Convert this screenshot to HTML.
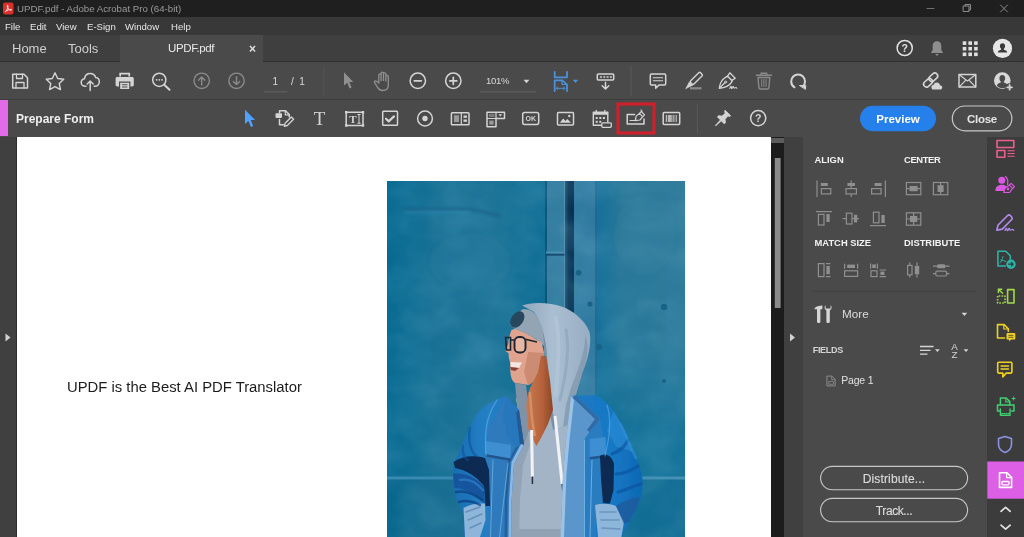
<!DOCTYPE html>
<html><head><meta charset="utf-8"><title>UPDF.pdf - Adobe Acrobat Pro</title>
<style>
*{margin:0;padding:0;box-sizing:border-box}
html,body{width:1024px;height:537px;overflow:hidden;background:#4a4a4a;font-family:"Liberation Sans",sans-serif;}
.a{position:absolute}
.t{position:absolute;white-space:nowrap;line-height:1}
#title{left:0;top:0;width:1024px;height:17px;background:#1f1f1f}
#menu{left:0;top:17px;width:1024px;height:18px;background:#383838}
#tabs{left:0;top:35px;width:1024px;height:27px;background:#3f3f3f;border-bottom:1px solid #303030}
#tab{left:120px;top:35px;width:143px;height:28px;background:#4a4a4a}
#tb1{left:0;top:63px;width:1024px;height:37px;background:#4a4a4a;border-bottom:1px solid #3d3d3d}
#tb2{left:0;top:100px;width:1024px;height:37px;background:#4a4a4a}
#pink{left:0;top:100px;width:8px;height:36px;background:#e26be8}
#lstrip{left:0;top:137px;width:17px;height:400px;background:#404040;border-right:1px solid #2c2c2c}
#page{left:17px;top:137px;width:754px;height:400px;background:#fff}
#sb{left:771px;top:137px;width:13px;height:400px;background:#1c1c1c}
#gap{left:784px;top:137px;width:19px;height:400px;background:#404040}
#panel{left:803px;top:137px;width:184px;height:400px;background:#4a4a4a}
#rstrip{left:987px;top:137px;width:37px;height:400px;background:#3c3c3c}
svg{position:absolute;overflow:visible}
</style></head><body>
<div class="a" id="title"></div>
<div class="a" id="menu"></div>
<div class="a" id="tabs"></div>
<div class="a" id="tab"></div>
<div class="a" id="tb1"></div>
<div class="a" id="tb2"></div>
<div class="a" id="pink"></div>
<div class="a" id="lstrip"></div>
<div class="a" id="page"></div>
<div class="a" id="sb"></div>
<div class="a" id="gap"></div>
<div class="a" id="panel"></div>
<div class="a" id="rstrip"></div>

<!-- PHOTO -->
<svg class="a" style="left:387px;top:181px" width="298" height="356" viewBox="387 181 298 356">
<defs>
<clipPath id="pc"><rect x="387" y="181" width="298" height="356"/></clipPath>
<filter id="b1" x="-10%" y="-10%" width="120%" height="120%"><feGaussianBlur stdDeviation="0.7"/></filter>
<filter id="b2" x="-20%" y="-20%" width="140%" height="140%"><feGaussianBlur stdDeviation="1.6"/></filter>
<filter id="b4" x="-30%" y="-30%" width="160%" height="160%"><feGaussianBlur stdDeviation="4"/></filter>
<filter id="noise" x="0" y="0" width="100%" height="100%"><feTurbulence type="fractalNoise" baseFrequency="0.02 0.03" numOctaves="3" seed="7" result="n"/><feColorMatrix in="n" type="matrix" values="0 0 0 0 0.1  0 0 0 0 0.35  0 0 0 0 0.5  1.6 0 0 0 -0.62"/></filter><filter id="noise2" x="0" y="0" width="100%" height="100%"><feTurbulence type="fractalNoise" baseFrequency="0.025 0.03" numOctaves="3" seed="23" result="n"/><feColorMatrix in="n" type="matrix" values="0 0 0 0 0.3  0 0 0 0 0.62  0 0 0 0 0.78  1.6 0 0 0 -0.62"/></filter>
<linearGradient id="wallL" x1="0" y1="0" x2="1" y2="0"><stop offset="0" stop-color="#076a92"/><stop offset="0.3" stop-color="#187196"/><stop offset="0.65" stop-color="#1d7497"/><stop offset="1" stop-color="#0f6e96"/></linearGradient>
<linearGradient id="wallR" x1="0" y1="0" x2="1" y2="0"><stop offset="0" stop-color="#14709a"/><stop offset="0.3" stop-color="#2a7899"/><stop offset="1" stop-color="#317c9b"/></linearGradient><linearGradient id="wallRv" x1="0" y1="0" x2="0" y2="1"><stop offset="0" stop-color="#0f7099" stop-opacity="0"/><stop offset="0.45" stop-color="#0f7099" stop-opacity="0.1"/><stop offset="0.75" stop-color="#0f7099" stop-opacity="0.85"/><stop offset="1" stop-color="#0f7099" stop-opacity="0.9"/></linearGradient><linearGradient id="gapg" x1="0" y1="0" x2="1" y2="0"><stop offset="0" stop-color="#1a5c84"/><stop offset="0.45" stop-color="#0a3252"/><stop offset="1" stop-color="#082d4d"/></linearGradient>
<linearGradient id="hood" x1="0" y1="0" x2="1" y2="0"><stop offset="0" stop-color="#8fa6bb"/><stop offset="0.45" stop-color="#abbfd2"/><stop offset="1" stop-color="#97adc2"/></linearGradient>
<linearGradient id="denL" x1="0" y1="0" x2="1" y2="0"><stop offset="0" stop-color="#186db2"/><stop offset="0.5" stop-color="#2580c6"/><stop offset="1" stop-color="#1f72b8"/></linearGradient>
<linearGradient id="denR" x1="0" y1="0" x2="1" y2="0"><stop offset="0" stop-color="#2377bd"/><stop offset="0.6" stop-color="#1579c6"/><stop offset="1" stop-color="#0f68b4"/></linearGradient>
<linearGradient id="hair" x1="0" y1="0" x2="1" y2="0"><stop offset="0" stop-color="#c77a52"/><stop offset="0.6" stop-color="#b5613a"/><stop offset="1" stop-color="#8a4628"/></linearGradient>
</defs>
<g clip-path="url(#pc)">
<!-- wall -->
<rect x="387" y="181" width="161" height="356" fill="url(#wallL)"/>
<rect x="596" y="181" width="89" height="356" fill="url(#wallR)"/><rect x="596" y="181" width="89" height="356" fill="url(#wallRv)"/>
<rect x="547" y="181" width="17.500" height="200" fill="#327da0"/>
<rect x="564.500" y="181" width="9.500" height="200" fill="url(#gapg)"/>

<rect x="574" y="181" width="22" height="260" fill="#307aa0"/>
<rect x="595" y="181" width="2" height="300" fill="#1b6a90"/>
<rect x="545" y="181" width="2" height="150" fill="#0e5278"/>
<rect x="546" y="251.700" width="18.500" height="2" fill="#4a8fb0"/><rect x="546" y="253.700" width="18.500" height="2" fill="#0e4468"/>
<!-- wall texture -->
<rect x="387" y="181" width="298" height="356" filter="url(#noise)" opacity=".2"/>
<rect x="387" y="181" width="298" height="356" filter="url(#noise2)" opacity=".16"/>
<g filter="url(#b2)">
<path d="M404 209 H470 L500 216" stroke="#165f86" stroke-width="2.5" fill="none" opacity=".8"/>
<path d="M404 212.5 H470" stroke="#3089b5" stroke-width="2" fill="none" opacity=".7"/>
<ellipse cx="470" cy="262" rx="40" ry="28" fill="#2a7c9e" opacity=".35"/>

<ellipse cx="645" cy="235" rx="30" ry="40" fill="#3a829f" opacity=".3"/>
</g>
<!-- rivets -->
<g fill="#1a6288"><circle cx="578.600" cy="272.800" r="2.800"/><circle cx="590" cy="304" r="2.6"/><circle cx="599" cy="347" r="3"/><circle cx="664" cy="307" r="3.2"/><circle cx="664" cy="381" r="2"/></g>
<!-- horizontal seam -->
<rect x="387" y="476.5" width="70" height="3" fill="#3d8db5" opacity=".9"/>
<rect x="640" y="476.5" width="45" height="3" fill="#4a93b8" opacity=".9"/>
<rect x="387" y="479.5" width="298" height="58" fill="#0f4f74" opacity=".12"/>

<!-- PERSON -->
<g filter="url(#b1)">
<!-- left sleeve + body -->
<path d="M506 396 C494 400 485 405 479.400 411 C474 417 471 424 468.800 429.400 L458.200 453.200 C455 461 453 468 452.900 474.400 C452.800 482 454 490 455.600 495.500 C458 503 461 509 463.500 514 L464.800 537 L512 537 L512 502 L514 464 L524 445 L519 410 Z" fill="url(#denL)"/>
<!-- right sleeve + body -->
<path d="M571 396 L596.300 395 C604 400 609 405 613.500 411 C619 419 623 427 626.700 434.700 L637.300 461 C640 468 642 474 642.600 479.700 C643 487 642 494 640 500.800 C637 509 633 516 629.400 522 L621.400 537 L560.600 537 L563 474 L566 440 Z" fill="url(#denR)"/>
<!-- hoodie body -->
<path d="M516 398 L524 445 L514 464 L511.500 502 L511.500 537 L560.600 537 L563 474 L567 438 L573 400 L560 396 Z" fill="#a3b4c6"/>
<path d="M516 398 L524 445 L514 464 L511.500 502 L511.500 537 L519 537 L520 500 L523 465 L530 445 L524 400 Z" fill="#92a3b6"/>
<path d="M511.500 529 H560.600 V537 H511.500Z" fill="#91a2b5"/>
<!-- hood -->
<path d="M522 305.500 C530 302 550 302 561.500 306.600 C572 310 585 320 589.500 332 C592 342 588 360 582.500 372 L577.800 388 L573 404.500 L570 424 L553 430 L549 410 L546 380 L544 345 L534 312 Z" fill="url(#hood)"/>
<path d="M534 312 C541 322 545 335 546.500 350 L549 380 L552 410 L557 428 L553 430 L549 410 L546 380 L544 345 Z" fill="#7a8fa3"/>
<path d="M577.800 388 L573 404.500 L570 424 L563 427 L566 405 L572 385 C580 365 586 348 585 335 C590 345 587 362 582.500 372 Z" fill="#8298ad" opacity=".8"/>
<!-- hood left/neck -->
<path d="M515 383 L526 385 L531 425 L524 445 L517 404 Z" fill="#8093a6"/>
<!-- beanie -->
<path d="M510.300 325.300 C512 319 515 315 518.400 312.500 L523 309 C527 309 531 310 533.600 312.500 C538 318 541 324 542.900 330 L544 346 L536 339 L526.600 333.400 L515 328.800 Z" fill="#93a5b5"/>
<ellipse cx="517.300" cy="319.500" rx="6" ry="9" transform="rotate(35 517.300 319.500)" fill="#28465c"/>
<!-- face -->
<path d="M511.400 330 C509.500 335 508.500 340 508.300 344 L505.300 351 L508.600 353.200 L508.800 358 L510 362 L510.300 371 C510.600 377 512 381 514.500 382.800 L528 385 C533 383 537 379 540 372 L544 353 L541.700 342.800 L526.600 333.400 L515 328.800 Z" fill="#e0a48e"/>
<path d="M528 352 L544 353 L540 372 C537 379 533 383 528 385 L524 372 Z" fill="#cc8b73"/>
<!-- mouth -->
<path d="M510.300 362 L522 362.500 L519 368 L511 367 Z" fill="#f3e6e2"/>
<path d="M510.300 367 L519 368 L515 371 L511 370 Z" fill="#8c3f3a"/>
<!-- glasses -->
<path d="M505.600 337.500 H510.500 V350 H506.500Z" fill="none" stroke="#1d2530" stroke-width="1.600"/>
<rect x="514.500" y="337" width="11" height="15.500" rx="4.500" fill="#e8b7a4" stroke="#1d2530" stroke-width="1.900"/>
<path d="M510.500 340 H514.500 M525.500 339.300 L537 342" stroke="#1d2530" stroke-width="1.500" fill="none"/>
<!-- hair -->
<path d="M541 356 L538 372 L530 388 C527 396 526 404 526.600 410 L528 428 L533 440 L536.500 446 L541 438 L548 424 L553 410 L550 380 L546 356 Z" fill="url(#hair)"/>
<path d="M530 392 C531 405 531 420 535 436" stroke="#dc9568" stroke-width="2.500" fill="none" opacity=".8"/>
<!-- drawstrings -->
<path d="M531.600 430 L532.400 476.600" stroke="#f1f3f6" stroke-width="3" fill="none"/>
<path d="M532.400 476.600 V484" stroke="#2a2f3a" stroke-width="1.500"/>
<path d="M555 416 L562.200 484" stroke="#f1f3f6" stroke-width="3" fill="none"/>
<path d="M562.200 484 L562.800 491" stroke="#2a2f3a" stroke-width="1.500"/>
<!-- left front panel (lighter) -->
<path d="M506 396 L519 410 L524 445 L514 464 L511.500 502 L511.500 537 L486 537 L489 500 L486 458 L488 430 Z" fill="#2e7abd"/>
<!-- left collar -->
<path d="M506 396 L519 410 L524 445 L516 447 L507 436 L503 415 Z" fill="#2877bc"/>
<path d="M519 410 L524 445 L520 446 L516 412 Z" fill="#1f4f86" opacity=".7"/>
<!-- left lapel inner edge light -->
<path d="M524 445 L514 464 L511.500 502 L511.500 537 L508.500 537 L509 500 L511.500 462 L521 444 Z" fill="#8cb8e2"/>
<path d="M507 537 L507.500 500 L510 462 L519 446 L516 447 L507.500 462 L505 500 L504.500 537 Z" fill="#245a94" opacity=".8"/>
<!-- left pocket flap -->
<path d="M485.500 441 L511 445 L510.500 458.500 L485 454 Z" fill="#3e8fd1"/>
<path d="M485 454 L510.500 458.500 L510.500 461 L485 456.500 Z" fill="#1e4c80" opacity=".8"/>
<!-- left dark crease -->
<path d="M453.500 462 C462 456 474 455 485 458 L489 470 L490 506 L485.500 506 L484 486 C476 476 466 470 455 468 Z" fill="#0b2a52"/>
<path d="M453 474 C462 472 474 476 484 486 L485 504 C476 494 464 488 454.500 488 Z" fill="#13549e"/>
<!-- left cuff -->
<path d="M463.500 508 C470 504 478 503 485 503.500 L485.500 520 L480 537 L465 537 Z" fill="#8db6da"/>
<!-- right lapel / placket -->
<path d="M571 396 L575 395 L600 419 L589.700 432 L584 440 L584 537 L560.600 537 L563 474 L566 440 Z" fill="#5a95cb"/>
<path d="M571 396 L566 440 L563 474 L560.600 537 L564 537 L566.500 474 L569.500 440 L574 400 Z" fill="#9cc3e6"/>
<path d="M575 395 L600 419 L589.700 432 L587 430 L595 419 L573 398 Z" fill="#26609c" opacity=".8"/>
<!-- right body front panel -->
<path d="M584 440 L589.700 432 L600 419 L604 440 L601 470 L603 503 L596 506 L596 537 L584 537 Z" fill="#2a7cc1"/>
<!-- right pocket flap -->
<path d="M589.700 439 L605.600 437 L606 455 L589.700 457 Z" fill="#3e8fd1"/>
<path d="M589.700 457 L606 455 L606 457.500 L589.700 459.500 Z" fill="#1e4c80" opacity=".8"/>
<!-- right dark crease -->
<path d="M600 456 C606 452 612 456 614 464 L613.500 490 L610 503.500 L603 503 L601 478 Z" fill="#0b2a52"/>
<!-- right sleeve highlight -->
<path d="M613.500 411 C619 419 623 427 626.700 434.700 L634 453 C628 450 622 447 616 447 L607 430 Z" fill="#2a8ad3" opacity=".7"/>
<!-- right cuff -->
<path d="M595 505 C602 503 610 503.500 616 506 L624 522 L621.400 537 L598 537 Z" fill="#8db6da"/>
<path d="M616 506 C622 502 630 498 640 497 L637 507 L629 522 L624 524 Z" fill="#1f5796" opacity=".7"/>
<!-- seams & folds -->
<g fill="none" stroke-linecap="round">
<path d="M497 400 C487 415 484 430 486 456" stroke="#5aa5e0" stroke-width="1.200" opacity=".8"/>
<path d="M493 460 L490.500 537 M508 463 L499.500 537" stroke="#6fb2e3" stroke-width="1" opacity=".8"/>
<path d="M607 405 C612 420 609 440 605 456" stroke="#5aa5e0" stroke-width="1.200" opacity=".7"/>
<path d="M592 460 L590 537 M584.500 440 L584.500 537" stroke="#7fbbe8" stroke-width="1" opacity=".8"/>
<path d="M470 428 C468 440 470 450 476 456 M463 446 C462 452 464 458 468 460" stroke="#0f4f96" stroke-width="2.500" opacity=".55"/>
<path d="M456 492 C464 490 474 494 482 500 M459 502 C466 500 474 502 480 505" stroke="#0c3d7c" stroke-width="2.500" opacity=".7"/>
<path d="M460 480 C468 478 476 482 483 490" stroke="#2b7ac2" stroke-width="2.500" opacity=".8"/>
<path d="M628 440 C624 448 618 452 612 454 M638 466 C632 470 624 474 616 474 M641 484 C634 486 626 490 618 492" stroke="#0c4f9c" stroke-width="3" opacity=".6"/>
<path d="M620 424 C626 434 630 446 636 458" stroke="#2f93dc" stroke-width="3" opacity=".5"/>
<path d="M466 512 L480 507 M468 520 L482 514 M470 528 L481 523" stroke="#5c86b0" stroke-width="1.500" opacity=".8"/>
<path d="M600 512 L616 512 M601 520 L619 520 M602 528 L620 529" stroke="#5c86b0" stroke-width="1.500" opacity=".7"/>
<path d="M566 330 C570 350 566 375 560 400" stroke="#8ba2b8" stroke-width="3" opacity=".6"/>
<path d="M556 318 C560 340 558 365 556 395" stroke="#bacbdb" stroke-width="4" opacity=".5"/>
</g>
</g>
</g>
</g>
</svg>

<!-- ICONS -->
<svg class="a" style="left:0;top:0" width="1024" height="537" viewBox="0 0 1024 537" fill="none" stroke-linecap="round" stroke-linejoin="round">
<g id="titleicons">
  <rect x="3" y="2.5" width="10.5" height="12" rx="2" fill="#d9302a"/>
  <path d="M5.5 11.5c1.5-1 2.6-3.5 2.6-5.5 0-.9-1-.9-1 0 0 1.800 2 4 3.900 4.300.8.100.8-.9 0-.9-1.800 0-4 .900-5.500 2.100z" stroke="#fff" stroke-width=".8"/>
  <path d="M927 8.500h7" stroke="#707070" stroke-width="1"/>
  <rect x="963.5" y="6" width="5.500" height="5.500" stroke="#8c8c8c" stroke-width="1"/>
  <path d="M965 6v-1.500h5.500v5.500h-1.500" stroke="#8c8c8c" stroke-width="1"/>
  <path d="M1000.500 5l7 7m0-7l-7 7" stroke="#8c8c8c" stroke-width="1"/>
</g>
<g id="tabicons">
  <circle cx="904.700" cy="48" r="7.600" stroke="#e2e2e2" stroke-width="1.500"/>
  <text x="904.700" y="52" font-family="Liberation Sans, sans-serif" font-size="10.500" font-weight="bold" fill="#e2e2e2" stroke="none" text-anchor="middle">?</text>
  <path d="M937 41.300c-3 0-4.300 2.300-4.300 5v3.500l-1.800 3.200h12.200l-1.800-3.200v-3.500c0-2.700-1.300-5-4.300-5zm-1.500 12.700h3c0 2-3 2-3 0z" fill="#8e8e8e"/>
  <g fill="#e0e0e0"><rect x="962.700" y="41.300" width="3.600" height="3.600"/><rect x="968.400" y="41.300" width="3.600" height="3.600"/><rect x="974.100" y="41.300" width="3.600" height="3.600"/><rect x="962.700" y="46.900" width="3.600" height="3.600"/><rect x="968.400" y="46.900" width="3.600" height="3.600"/><rect x="974.100" y="46.900" width="3.600" height="3.600"/><rect x="962.700" y="52.500" width="3.600" height="3.600"/><rect x="968.400" y="52.500" width="3.600" height="3.600"/><rect x="974.100" y="52.500" width="3.600" height="3.600"/></g>
  <circle cx="1002.500" cy="48.400" r="9.600" fill="#e6e6e6"/>
  <path d="M1002.500 43.200c1.700 0 2.600 1.300 2.600 2.800 0 1.300-.6 2.300-1.200 2.800v.9c2 .5 3.300 1.300 3.300 2.800h-9.400c0-1.500 1.300-2.300 3.300-2.800v-.9c-.6-.5-1.200-1.500-1.200-2.800 0-1.500.9-2.800 2.600-2.800z" fill="#3a3a3a"/>
</g>
<g id="tb1icons" stroke="#d4d4d4" stroke-width="1.500">
  <!-- save -->
  <path d="M12.700 74.200h11.300l3.500 3.500v10.300h-14.800z"/>
  <path d="M16.500 74.200v4.300h6v-4.300M16 88v-5.500h8v5.500" stroke-width="1.300"/>
  <!-- star -->
  <path d="M55 72.800l2.650 5.700 6.100.75-4.500 4.250 1.200 6.100-5.450-3.050-5.450 3.050 1.200-6.100-4.500-4.250 6.100-.75z" stroke-width="1.400"/>
  <!-- cloud up -->
  <path d="M86 86.300h-.8c-2.300 0-4-1.700-4-3.800 0-2 1.500-3.500 3.300-3.800.4-3 2.700-5.200 5.700-5.200 2.700 0 4.800 1.700 5.500 4.100 2 .2 3.600 2 3.600 4.200 0 2.500-1.900 4.500-4.300 4.500h-.8"/>
  <path d="M90.200 90.500v-9.300m-3 2.800l3-3 3 3"/>
  <!-- printer -->
  <g fill="#d4d4d4" stroke="none">
  <path d="M119.300 72.800h10.800v3.700h-1.700v-2h-7.400v2h-1.700z"/>
  <path d="M117.300 77h14.800c1 0 1.700.7 1.700 1.700v6.100c0 .9-.7 1.600-1.700 1.600h-1.700v-4.800h-11.400v4.800h-1.700c-1 0-1.700-.7-1.700-1.600v-6.100c0-1 .7-1.700 1.700-1.700z"/>
  <path d="M120.200 82.800h9v6.100h-9zm1.800 1.500v1h5.400v-1zm0 2.100v1h5.400v-1z" fill-rule="evenodd"/>
  </g>
  <!-- magnifier -->
  <circle cx="159.300" cy="79.800" r="6.600"/>
  <path d="M164.200 84.700l5.300 5.100" stroke-width="2"/>
  <g fill="#d4d4d4" stroke="none"><circle cx="156.600" cy="79.800" r=".9"/><circle cx="159.300" cy="79.800" r=".9"/><circle cx="162" cy="79.800" r=".9"/></g>
  <!-- up/down circles -->
  <g stroke="#8a8a8a" stroke-width="1.400">
  <circle cx="201.700" cy="80.800" r="7.700"/><path d="M201.700 85v-8m-3.200 3.200l3.200-3.200 3.200 3.200"/>
  <circle cx="236.500" cy="80.800" r="7.700"/><path d="M236.500 76.600v8m-3.200-3.200l3.200 3.200 3.200-3.200"/>
  </g>
  <path d="M264 91.800h23" stroke="#636363" stroke-width="1"/>
  <path d="M323.800 66v30" stroke="#545454" stroke-width="1"/>
  <!-- cursor gray -->
  <path d="M344 72.300l9.300 9.600h-4l2.300 5.600-2 .9-2.400-5.600-3.200 2.800z" fill="#909090" stroke="none"/>
  <!-- hand -->
  <g stroke="#909090" stroke-width="1.300">
  <path d="M378.800 83v-7.800c0-1.600 2.300-1.600 2.300 0v5.500-7.300c0-1.600 2.400-1.600 2.400 0v7-6.300c0-1.600 2.400-1.600 2.400 0v6.800-4.400c0-1.600 2.400-1.600 2.400 0v8.500c0 3.300-2 5.500-5.500 5.500-2.700 0-4-1.200-5.200-3.200l-3-4.700c-.8-1.300.9-2.400 1.900-1.300z"/>
  </g>
  <!-- minus/plus -->
  <circle cx="417.800" cy="80.800" r="7.700"/><path d="M414.300 80.800h7" stroke-width="1.700"/>
  <circle cx="453.300" cy="80.800" r="7.700"/><path d="M449.800 80.800h7m-3.500-3.500v7" stroke-width="1.700"/>
  <!-- zoom dropdown -->
  <path d="M523.600 79.800h5.800l-2.900 3.500z" fill="#d4d4d4" stroke="none"/>
  <path d="M480 91.800h56" stroke="#636363" stroke-width="1"/>
  <!-- blue page -->
  <g stroke="#4b92db" stroke-width="1.800">
  <path d="M554.700 72v5.300h12.300v-5.300"/>
  <path d="M554.700 91v-10.700h7.600l4.700 4.400v6.300"/>
  <path d="M562 80v4.500h5" stroke-width="1.200"/>
  <path d="M556.500 88.300h8.500m-7.300-1.300l-1.400 1.300 1.400 1.300m5.800-2.600l1.400 1.300-1.400 1.300" stroke-width="1"/>
  </g>
  <path d="M572.800 79.800h5.400l-2.700 3.300z" fill="#4b92db" stroke="none"/>
  <!-- keyboard down -->
  <rect x="597.300" y="74" width="16.400" height="6" rx="1" stroke-width="1.500"/>
  <path d="M600.500 77h1m2.300 0h1m2.300 0h1m2.300 0h1" stroke-width="1.300"/>
  <path d="M605.500 82.300v6.500m-3.300-3l3.300 3.200 3.300-3.200"/>
  <path d="M631 66v30" stroke="#595959" stroke-width="1"/>
  <!-- comment -->
  <path d="M651.500 74h13c.7 0 1.200.5 1.200 1.200v8.500c0 .7-.5 1.200-1.200 1.200h-5.500l-3.300 3.400v-3.400h-4.200c-.7 0-1.200-.5-1.200-1.200v-8.500c0-.7.500-1.200 1.200-1.200z"/>
  <path d="M653.300 77.800h9.300m-9.300 3h9.300" stroke-width="1.100"/>
  <!-- highlighter -->
  <rect x="-2.300" y="-7.500" width="4.600" height="14" rx="1.300" transform="translate(696 78.800) rotate(45)" stroke-width="1.400"/>
  <path d="M689.600 82.200l3 3-3.400 1.600-3.400 1.800 1.800-3.200z" fill="#d4d4d4" stroke-width=".8"/>
  <path d="M690 88.300h11.500" stroke="#8a8a8a" stroke-width="2.200" stroke-linecap="butt"/>
  <!-- sign pen -->
  <path d="M719.300 88.200c.5-5 2.600-8.800 6.700-11.200l1.600-.8 4.600 4.600-.8 1.600c-2.400 4.100-6.200 5.500-12.100 5.800z" stroke-width="1.400"/>
  <path d="M727.400 76.400l2.400-3.600 5.400 5.400-3.600 2.400M719.600 87.900l5.200-5.200" stroke-width="1.300"/>
  <circle cx="725.600" cy="82" r="1" stroke-width="1"/>
  <path d="M729.800 88.400c.8-2.600 1.600-2.600 1.600-.6 0 1 .7 1 1.200-.5.400-1.100 1-1.100 1 0 0 .9.800 1 1.500.5.600-.6 1.200-.4 1.700.4" stroke-width="1.100"/>
  <!-- trash -->
  <g stroke="#8a8a8a" stroke-width="1.400">
  <path d="M756.300 75.300h15.200M761 75v-1.800h5.800v1.800M758 77.500l.9 10.200c.1.800.6 1.300 1.400 1.300h7.200c.8 0 1.300-.5 1.400-1.300l.9-10.200z"/>
  <path d="M761.700 79.500v7m2.200-7v7m2.200-7v7" stroke-width="1"/>
  </g>
  <!-- rotate -->
  <path d="M794.500 87.300c-2-1.200-3.300-3.400-3.300-5.900 0-3.800 3.100-6.900 6.900-6.900s6.900 3.100 6.900 6.900c0 1.700-.6 3.200-1.500 4.400" stroke-width="2"/>
  <path d="M799.800 85.500h6l-.3 3.500z" fill="#d4d4d4" stroke-width="1"/>
  <!-- link cloud -->
  <rect x="-4.900" y="-2.900" width="9.800" height="5.800" rx="2.900" transform="translate(933.300 77.300) rotate(-42)" stroke-width="1.600"/>
  <rect x="-4.900" y="-2.900" width="9.800" height="5.800" rx="2.900" transform="translate(928 82.800) rotate(-42)" stroke-width="1.600"/>
  <path transform="translate(-1 0)" d="M934 89.600h7c1.300 0 2.300-1 2.300-2.200s-1-2.200-2.300-2.200c-.3-1.600-1.600-2.600-3.200-2.600-1.500 0-2.700.9-3.100 2.200-1.300.1-2.300 1.100-2.300 2.400 0 1.300 1 2.400 1.600 2.400z" fill="#d4d4d4" stroke="none"/>
  <!-- mail -->
  <rect x="959" y="74.500" width="16.800" height="12.500" stroke-width="1.500"/>
  <path d="M959.300 74.800l8.100 6.200 8.100-6.200M959.300 86.800l6.500-6.700m9.700 6.700l-6.500-6.700" stroke-width="1.200"/>
  <!-- user plus -->
  <circle cx="1002.300" cy="80.600" r="8.300" fill="#d8d8d8" stroke="none"/>
  <path d="M1002.300 75c1.900 0 2.900 1.500 2.900 3.200 0 1.500-.7 2.600-1.400 3.200v1c2.300.6 3.700 1.700 4 3.200-1.400 1.800-3.400 2.600-5.500 2.600s-4.100-.8-5.500-2.600c.3-1.500 1.700-2.600 4-3.200v-1c-.7-.6-1.400-1.700-1.400-3.200 0-1.700 1-3.200 2.900-3.200z" fill="#4a4a4a" stroke="none"/>
  <circle cx="1009.600" cy="87.500" r="4.300" fill="#4a4a4a" stroke="none"/>
  <path d="M1007.200 87.300h4.800m-2.400-2.400v4.800" stroke-width="1.800"/>
</g>
</svg>

<!-- ICONS2 -->
<svg class="a" style="left:0;top:0" width="1024" height="537" viewBox="0 0 1024 537" fill="none" stroke-linecap="round" stroke-linejoin="round">
<g id="tb2icons" stroke="#d4d4d4" stroke-width="1.500">
  <!-- blue cursor -->
  <path d="M245 109.800l10 10.300h-4.300l2.500 6-2.200 1-2.600-6-3.400 3z" fill="#4da3ff" stroke="none"/>
  <!-- doc pencil -->
  <path d="M279.500 113v-2.300h6l3.800 3.800v2.500M279.500 119.500v5.300h4" stroke-width="1.500"/>
  <path d="M285.300 110.800v4h4" stroke-width="1.200"/>
  <rect x="275.500" y="113.300" width="6.500" height="4.600" rx=".8" fill="#d4d4d4" stroke="none"/>
  <path d="M284.300 126.300l.8-3 6.300-6.300 2.200 2.200-6.300 6.300z" stroke-width="1.300"/>
  <!-- T -->
  <text x="319.500" y="125" font-family="Liberation Serif, serif" font-size="19" fill="#d4d4d4" stroke="none" text-anchor="middle">T</text>
  <!-- text field -->
  <rect x="346.200" y="112.200" width="16.800" height="13.300" stroke-width="1.500"/>
  <g fill="#d4d4d4" stroke="none"><rect x="345" y="111" width="2.400" height="2.400"/><rect x="361.800" y="111" width="2.400" height="2.400"/><rect x="345" y="124.300" width="2.400" height="2.400"/><rect x="361.800" y="124.300" width="2.400" height="2.400"/></g>
  <text x="352.800" y="123" font-family="Liberation Serif, serif" font-size="11" font-weight="bold" fill="#d4d4d4" stroke="none" text-anchor="middle">T</text>
  <path d="M359 114.500v8.700m-1.200-8.700h2.400m-2.400 8.700h2.400" stroke-width="1"/>
  <!-- checkbox -->
  <rect x="382.700" y="111.300" width="14.800" height="14" rx=".8" stroke-width="1.500"/>
  <path d="M386 118.700l2.700 2.700 5.300-5" stroke-width="2.200"/>
  <!-- radio -->
  <circle cx="425" cy="118.500" r="7.400" stroke-width="1.500"/>
  <circle cx="425" cy="118.500" r="2.700" fill="#d4d4d4" stroke="none"/>
  <!-- dropdown -->
  <rect x="451.400" y="112.800" width="17.600" height="11.900" rx=".8" stroke-width="1.500"/>
  <path d="M461.300 113v11.500" stroke-width="1.200"/>
  <rect x="454" y="115.300" width="5" height="6.800" fill="#9a9a9a" stroke="none"/>
  <rect x="463.500" y="115.500" width="3.400" height="2.300" fill="#d4d4d4" stroke="none"/><rect x="463.500" y="119.500" width="3.400" height="2.300" fill="#d4d4d4" stroke="none"/>
  <!-- listbox -->
  <path d="M487 112.300h17.500v6.200h-8.500v8.200h-9z" stroke-width="1.500"/>
  <path d="M487 118.500h9m0-6v6" stroke-width="1.200"/>
  <rect x="489.300" y="120.600" width="4.300" height="4" fill="#9a9a9a" stroke="none"/>
  <rect x="489" y="113.800" width="5.500" height="3.200" fill="#7a7a7a" stroke="none"/>
  <path d="M498.500 114.300h3.600l-1.800 2.200z" fill="#d4d4d4" stroke="none"/>
  <!-- OK -->
  <rect x="522.700" y="112.600" width="16" height="11.800" rx="1.800" stroke-width="1.500"/>
  <text x="530.700" y="121.300" font-family="Liberation Sans, sans-serif" font-size="7" font-weight="bold" fill="#d4d4d4" stroke="none" text-anchor="middle">OK</text>
  <!-- image -->
  <rect x="557.500" y="112.600" width="16" height="12.300" rx=".8" stroke-width="1.500"/>
  <path d="M559.800 122.800l3.400-4.300 2.300 2.400 1.800-1.800 3.700 3.700z" fill="#d4d4d4" stroke="none"/>
  <circle cx="569.300" cy="116" r="1.200" fill="#d4d4d4" stroke="none"/>
  <!-- date -->
  <path d="M593.300 112.200h14.500v13h-14.500z" stroke-width="1.400"/>
  <path d="M593.300 113.600h14.500" stroke-width="2.300" stroke-linecap="butt"/>
  <path d="M596.300 110.400v2.500m8.500-2.500v2.500" stroke-width="1.300"/>
  <g fill="#d4d4d4" stroke="none"><rect x="595.700" y="117" width="2" height="2"/><rect x="599.300" y="117" width="2" height="2"/><rect x="602.900" y="117" width="2" height="2"/><rect x="595.700" y="120.800" width="2" height="2"/><rect x="599.300" y="120.800" width="2" height="2"/></g>
  <rect x="601.800" y="122.800" width="9.500" height="4.500" rx="1" fill="#4a4a4a" stroke-width="1.300"/>
  <!-- red highlight -->
  <rect x="618" y="104" width="36" height="29" stroke="#cd202c" stroke-width="3.200" stroke-linejoin="miter"/>
  <!-- signature -->
  <path d="M634.500 114.500h-7.300v9.500h16.800v-5" stroke-width="1.500"/>
  <path d="M630 120.500h5.500" stroke-width="1.100"/>
  <path d="M635.300 120.700l.8-4.600 3.300-2.700 3.300 3.300-2.700 3.300z" stroke-width="1.200"/>
  <path d="M639.800 113l1.500-1.500 3.300 3.300-1.500 1.500M641 109.800l1 1.500" stroke-width="1.100"/>
  <!-- barcode -->
  <rect x="663.200" y="112.600" width="16.500" height="11.800" rx=".8" stroke-width="1.500"/>
  <path d="M666.300 115v7m2-7v7m3.600-7v7m2-7v7m2.300-7v7" stroke-width="1" stroke-linecap="butt"/>
  <path d="M670 115v7" stroke-width="1.600" stroke-linecap="butt"/>
  <path d="M697.400 104v29" stroke="#595959" stroke-width="1"/>
  <!-- pin -->
  <path d="M725.300 110.300l5.500 5.500-1.300.9-1.500-.7-2.800 3.300.4 3.300-1.300 1.300-3-3-5.500 5-.5-.5 5-5.500-3-3 1.300-1.300 3.300.4 3.300-2.800-.7-1.500z" fill="#d4d4d4" stroke-width=".6"/>
  <!-- help -->
  <circle cx="758.200" cy="118.100" r="7.600" stroke="#d4d4d4" stroke-width="1.500"/>
  <text x="758.200" y="122" font-family="Liberation Sans, sans-serif" font-size="10.500" font-weight="bold" fill="#d4d4d4" stroke="none" text-anchor="middle">?</text>
</g>
<!-- buttons -->
<rect x="860" y="105.700" width="76" height="25.600" rx="12.800" fill="#2680eb"/>
<rect x="952.300" y="106" width="59.600" height="24.800" rx="12.400" stroke="#c9c9c9" stroke-width="1.200"/>
<!-- left/right strip arrows -->
<path d="M5.500 333.500l5 4-5 4z" fill="#d0d0d0"/>
<path d="M790 333.500l5 4-5 4z" fill="#d0d0d0"/>
<!-- scrollbar -->
<rect x="771" y="138" width="13" height="5" fill="#5c5c5c"/>
<rect x="774.800" y="158" width="5.800" height="150" fill="#8a8a8a"/>
</svg>
<div class="t" style="left:272.500px;top:77px;font-size:10px;color:#d8d8d8">1</div>
<div class="t" style="left:291px;top:77px;font-size:10px;color:#d8d8d8">/&nbsp;&nbsp;1</div>
<div class="t" style="left:486px;top:76px;font-size:9.5px;letter-spacing:-0.25px;color:#d8d8d8">101%</div>
<div class="t" style="left:860px;top:113.7px;width:76px;text-align:center;font-size:11.5px;font-weight:bold;color:#fff">Preview</div>
<div class="t" style="left:952px;top:113.7px;width:60px;text-align:center;font-size:11.5px;letter-spacing:-0.3px;font-weight:bold;color:#e4e4e4">Close</div>

<!-- ICONS3 -->
<svg class="a" style="left:0;top:0" width="1024" height="537" viewBox="0 0 1024 537" fill="none" stroke-linecap="butt" stroke-linejoin="miter">
<g id="panelicons" stroke="#8f8f8f" stroke-width="1.200">
  <!-- align left -->
  <path d="M817 180.500v16.500"/><rect x="820.800" y="183" width="7" height="3" fill="#8f8f8f" stroke="none"/><rect x="821.400" y="188.600" width="9.400" height="5.300"/>
  <!-- align hcenter -->
  <path d="M851.200 180.500v16.500"/><rect x="847.400" y="183" width="7.600" height="3" fill="#8f8f8f" stroke="none"/><rect x="846" y="188.600" width="10.400" height="5.300" fill="#4a4a4a"/>
  <!-- align right -->
  <path d="M885.400 180.500v16.500"/><rect x="874.600" y="183" width="7" height="3" fill="#8f8f8f" stroke="none"/><rect x="871.600" y="188.600" width="9.400" height="5.300"/>
  <!-- center 1 -->
  <rect x="906.400" y="182.500" width="14.400" height="12.200"/><path d="M906.400 188.600h14.400"/><rect x="909.600" y="186" width="8" height="5.200" fill="#8f8f8f" stroke="none"/>
  <!-- center 2 -->
  <rect x="933.400" y="182.500" width="14.400" height="12.200"/><path d="M940.600 182.500v12.200"/><rect x="937.600" y="185.200" width="6" height="6.800" fill="#8f8f8f" stroke="none"/>
  <!-- align top -->
  <path d="M816 211.600h16"/><rect x="818.400" y="214.400" width="5.600" height="10.600"/><rect x="826.400" y="214" width="3.300" height="8" fill="#8f8f8f" stroke="none"/>
  <!-- align middle -->
  <path d="M842.500 218.600h16.500"/><rect x="846.400" y="213.200" width="5.600" height="10.800" fill="#4a4a4a"/><rect x="854" y="214.800" width="3.200" height="7.600" fill="#8f8f8f" stroke="none"/>
  <!-- align bottom -->
  <path d="M870 225.600h16"/><rect x="873.400" y="212.200" width="5.600" height="10.600"/><rect x="881.400" y="215" width="3.300" height="8" fill="#8f8f8f" stroke="none"/>
  <!-- center 3 -->
  <rect x="906.400" y="212.800" width="14.400" height="12.400"/><path d="M906.400 219h14.400M913.600 212.800v12.400"/><rect x="910" y="216" width="7.200" height="6" fill="#8f8f8f" stroke="none"/>
  <!-- match 1 -->
  <rect x="818.400" y="263.600" width="5.600" height="13"/><rect x="826.400" y="266" width="3.400" height="8.200" fill="#8f8f8f" stroke="none"/><path d="M826 263.600h4.400M826 276.600h4.400"/>
  <!-- match 2 -->
  <rect x="844.600" y="270.800" width="13" height="5.600"/><rect x="847.200" y="264.600" width="7.800" height="3.400" fill="#8f8f8f" stroke="none"/><path d="M844.600 263.800v5M857.600 263.800v5"/>
  <!-- match 3 -->
  <rect x="871" y="270.800" width="6" height="5.800"/><rect x="872.200" y="264.400" width="3.600" height="3.600" fill="#8f8f8f" stroke="none"/><path d="M870.600 263.400v5.400M877.400 263.400v5.400"/>
  <rect x="880.400" y="271.600" width="4" height="3.400" fill="#8f8f8f" stroke="none"/><path d="M879.600 270h6.400M879.600 276.600h6.400"/>
  <!-- distribute 1 -->
  <path d="M909.800 262.600v15M917 262.600v15"/><rect x="907.600" y="265.400" width="4.400" height="9.400" fill="#4a4a4a"/><rect x="914.800" y="266" width="4.400" height="8.200" fill="#8f8f8f" stroke="none"/>
  <!-- distribute 2 -->
  <path d="M933 266.200h16.400M933 273.600h16.400"/><rect x="937" y="264.200" width="8.400" height="4" rx="1.500" fill="#8f8f8f" stroke="none"/><rect x="935.800" y="271.200" width="10.800" height="4.800" rx="1.500" fill="#4a4a4a"/>
</g>
<path d="M812 291.300h164" stroke="#414141" stroke-width="1"/>
<!-- tools icon (More) -->
<g fill="#d6d6d6" stroke="none">
  <path d="M814.600 308.200c1.600-2 4.200-2.800 7.800-2.800v3.800h-2v12.600c0 1.600-3.400 1.600-3.400 0v-12.600h-2.400z"/>
  <path d="M825.600 305.200c-1.400 1-1.600 3.800.8 5.200v11.400c0 1.700 3.400 1.700 3.400 0v-11.400c2.400-1.400 2.200-4.200.8-5.200v3.400h-5z"/>
</g>
<path d="M961.600 312.700h5.600l-2.800 3.200z" fill="#d6d6d6"/>
<!-- fields sort icons -->
<path d="M920 346.500h13.500M920 350.300h10.500M920 354.100h7.500" stroke="#d6d6d6" stroke-width="1.300"/>
<path d="M935 349.300h4.800l-2.400 2.800z" fill="#d6d6d6"/>
<path d="M963.600 349.300h4.800l-2.400 2.800z" fill="#d6d6d6"/>
<text x="954.600" y="349.600" font-family="Liberation Sans, sans-serif" font-size="9.800" fill="#d6d6d6" text-anchor="middle">A</text>
<text x="954.600" y="358.200" font-family="Liberation Sans, sans-serif" font-size="9.800" fill="#d6d6d6" text-anchor="middle">Z</text>
<!-- page icon -->
<path d="M826.900 376.100h5l3.300 3.300v6.500h-8.300z" stroke="#8a8a8a" stroke-width="1"/>
<path d="M831.700 376.300v3.300h3.300" stroke="#8a8a8a" stroke-width=".9"/>
<rect x="828.800" y="381.600" width="4.600" height="2.600" stroke="#8a8a8a" stroke-width=".8"/>
<!-- panel buttons -->
<rect x="820.600" y="466.400" width="147" height="23.400" rx="11.700" stroke="#c8c8c8" stroke-width="1.100"/>
<rect x="820.600" y="498.400" width="147" height="23.400" rx="11.700" stroke="#c8c8c8" stroke-width="1.100"/>
</svg>
<div class="t" style="left:814.500px;top:155.100px;font-size:9.400px;font-weight:bold;color:#f2f2f2">ALIGN</div>
<div class="t" style="left:904px;top:155.100px;font-size:9.400px;font-weight:bold;letter-spacing:-0.35px;color:#f2f2f2">CENTER</div>
<div class="t" style="left:814.500px;top:238.400px;font-size:9.400px;font-weight:bold;color:#f2f2f2">MATCH SIZE</div>
<div class="t" style="left:904px;top:238.400px;font-size:9.400px;font-weight:bold;color:#f2f2f2">DISTRIBUTE</div>
<div class="t" style="left:842px;top:308.400px;font-size:11.700px;color:#dcdcdc">More</div>
<div class="t" style="left:812.700px;top:346.400px;font-size:9px;letter-spacing:-0.3px;font-weight:bold;color:#d4d4d4">FIELDS</div>
<div class="t" style="left:841.200px;top:375.200px;font-size:10.5px;letter-spacing:-0.2px;color:#e2e2e2">Page 1</div>
<div class="t" style="left:820px;top:472.600px;width:148px;text-align:center;font-size:12px;letter-spacing:0.15px;-webkit-text-stroke:0.15px #dadada;color:#dadada">Distribute...</div>
<div class="t" style="left:820px;top:504.600px;width:148px;text-align:center;font-size:12px;letter-spacing:-0.4px;-webkit-text-stroke:0.15px #dadada;color:#dadada">Track...</div>

<!-- ICONS4 -->
<svg class="a" style="left:0;top:0" width="1024" height="537" viewBox="0 0 1024 537" fill="none" stroke-linecap="round" stroke-linejoin="round">

<!-- 1 form layout pink -->
<g stroke="#ea5f8e" stroke-width="1.600">
  <rect x="997" y="140.500" width="16.800" height="7"/>
  <rect x="997" y="150.500" width="7.800" height="6.800"/>
  <path d="M1008 150.700h6.300m-6.300 2.800h6.300m-6.300 2.700h6.300" stroke-width="1.100"/>
</g>
<!-- 2 person sign magenta -->
<g fill="#da58e2" stroke="none">
  <circle cx="1001.800" cy="180.300" r="3.500"/>
  <path d="M995.300 191c0-4 2.800-6.200 6.500-6.200 2 0 3.600.6 4.700 1.800l-2.800 4.400z"/>
</g>
<g stroke="#da58e2" stroke-width="1.200">
  <path d="M1005.500 176.500c2 1.800 2.800 4.800 2 7.800"/>
  <path d="M1003.800 192.500l1.300-4.600 4.200-2.800 3.200 3.200-2.800 4.200z"/>
  <path d="M1009.600 184.600l1.600-1.200 3.200 3.200-1.200 1.600"/>
  <circle cx="1008" cy="189" r=".8"/>
</g>
<!-- 3 sign purple -->
<g stroke="#b48df3" stroke-width="1.600">
  <path d="M996.800 230.200l1.300-5.200 9.300-9.300c.9-.9 2.200-.9 3.100 0l1 1c.9.900.9 2.200 0 3.100l-9.300 9.300z"/>
  <path d="M1005 230.500c.9-2.800 2-2.800 2-.7 0 1.100.9 1.100 1.500-.5.500-1.200 1.200-1.200 1.200 0 0 1 .9 1.100 1.800.5.800-.6 1.500-.4 2.300.5" stroke-width="1.200"/>
</g>
<!-- 4 doc arrow teal -->
<g stroke="#2fb5a8" stroke-width="1.500">
  <path d="M1005.500 266h-7.600v-14.800h7.800l4.600 4.600v3.500"/>
  <path d="M1003 256.500c-.5 3-1.800 5.500-3.200 6.600m1-3c2 .2 4 .6 5.200 1.400" stroke-width=".9"/>
</g>
<circle cx="1011" cy="264.200" r="4.700" fill="#2fb5a8"/>
<path d="M1008.500 264.200h4.600m-1.800-1.900l1.900 1.900-1.900 1.900" stroke="#2e3a3a" stroke-width="1.200"/>
<!-- 5 green -->
<g stroke="#a2d94a" stroke-width="1.600">
  <rect x="1007.600" y="289.600" width="6.400" height="13.400"/>
  <path d="M997.600 296v7h7.400v-7z" stroke-dasharray="1.600 1.300" stroke-linecap="butt"/>
  <path d="M1002.600 293.200l-4.200-4m0 3.400v-3.400h3.400" stroke-width="1.400"/>
</g>
<!-- 6 doc comment yellow -->
<g stroke="#f0d121" stroke-width="1.600">
  <path d="M1004.500 338h-7v-13.400h6.600l4.200 4.200v2.500"/>
  <path d="M1003.800 324.800v4.200h4.200" stroke-width="1.200"/>
</g>
<path d="M1007.400 333h7c.5 0 .9.400.9.900v4.800c0 .5-.4.900-.9.900h-3.300l-2 2v-2h-1.700c-.5 0-.9-.4-.9-.9v-4.800c0-.5.400-.9.900-.9z" fill="#f0d121"/>
<path d="M1008.800 335.300h4.200m-4.200 2h4.200" stroke="#3b3b3b" stroke-width=".8"/>
<!-- 7 comment yellow -->
<g stroke="#f0d121" stroke-width="1.600">
  <path d="M998.700 362.300h12.200c.6 0 1 .4 1 1v8.800c0 .6-.4 1-1 1h-4.700l-3.400 3.800v-3.800h-4.100c-.6 0-1-.4-1-1v-8.800c0-.6.400-1 1-1z"/>
  <path d="M1001 366h7.600m-7.600 3h7.600" stroke-width="1.300"/>
</g>
<!-- 8 print green -->
<g stroke="#3fd06f" stroke-width="1.500">
  <path d="M1000.400 405v-7h5.800l3.600 3.600v3.400"/>
  <path d="M1005.800 398.200v3.800h3.800" stroke-width="1.100"/>
  <path d="M999.800 411h-2.300v-6h16.500v6h-2.300"/>
  <path d="M1000.400 409v6.200h9.600v-6.200" stroke-width="1.400"/>
  <path d="M1001.500 413.500h7.500" stroke-width="1" stroke-dasharray="1.200 1"/>
  <path d="M1013.600 397v3m-1.500-1.500h3" stroke-width="1"/>
</g>
<!-- 9 shield -->
<path d="M1005 436.400l6.500 2.200v5.600c0 3.800-2.600 6.700-6.500 8.300-3.900-1.600-6.500-4.500-6.500-8.300v-5.600z" stroke="#8a92e2" stroke-width="1.600"/>
<!-- 10 selected -->
<rect x="987.300" y="461.500" width="36.700" height="37.200" fill="#dd5fe6"/>
<g stroke="#fff" stroke-width="1.600">
  <path d="M999.500 472.800h7.500l4.600 4.600v10h-12.100z"/>
  <path d="M1006.600 473v4.600h4.600" stroke-width="1.200"/>
  <rect x="1002" y="481.500" width="7" height="3.400" rx=".8" stroke-width="1.300"/>
</g>
<path d="M1001 511.300l4.600-3.900 4.600 3.900" stroke="#e4e4e4" stroke-width="1.700"/>
<path d="M1001 525.200l4.600 3.900 4.600-3.900" stroke="#e4e4e4" stroke-width="1.700"/>
</svg>

<!-- TEXT -->
<div class="t" style="left:17px;top:3.6px;font-size:9.7px;color:#9a9a9a">UPDF.pdf - Adobe Acrobat Pro (64-bit)</div>
<div class="t" style="left:5px;top:21.7px;font-size:9.6px;color:#e6e6e6">File</div>
<div class="t" style="left:30px;top:21.7px;font-size:9.6px;color:#e6e6e6">Edit</div>
<div class="t" style="left:56px;top:21.7px;font-size:9.6px;color:#e6e6e6">View</div>
<div class="t" style="left:87px;top:21.7px;font-size:9.6px;color:#e6e6e6">E-Sign</div>
<div class="t" style="left:125px;top:21.7px;font-size:9.6px;color:#e6e6e6">Window</div>
<div class="t" style="left:171px;top:21.7px;font-size:9.6px;color:#e6e6e6">Help</div>
<div class="t" style="left:12px;top:42px;font-size:13px;color:#cfcfcf">Home</div>
<div class="t" style="left:68px;top:42px;font-size:13px;color:#cfcfcf">Tools</div>
<div class="t" style="left:168px;top:43.3px;font-size:11.5px;letter-spacing:-0.38px;color:#e8e8e8">UPDF.pdf</div>
<div class="t" style="left:249px;top:42.5px;font-size:12px;font-weight:bold;color:#e0e0e0">×</div>
<div class="t" style="left:16px;top:113.3px;font-size:12px;font-weight:bold;color:#efefef">Prepare Form</div>
<div class="t" style="left:67px;top:379.7px;font-size:14.83px;color:#1c1c1c">UPDF is the Best AI PDF Translator</div>
</body></html>
